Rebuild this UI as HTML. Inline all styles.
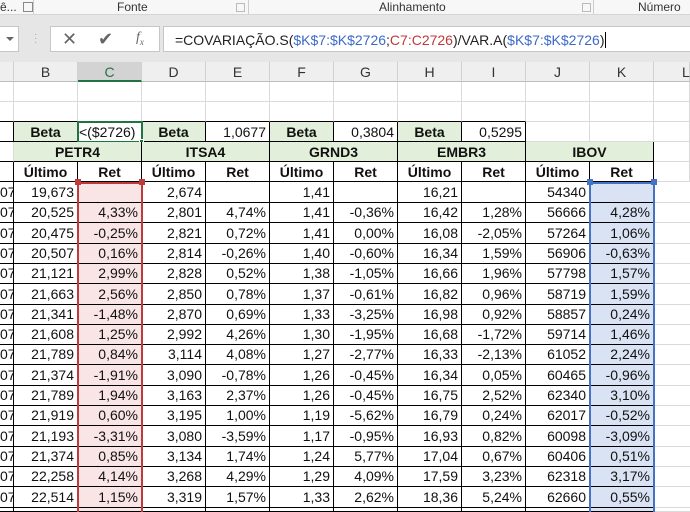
<!DOCTYPE html>
<html style="overflow:hidden;width:690px;height:512px"><head><meta charset="utf-8"><style>
*{margin:0;padding:0;box-sizing:border-box}
body{width:690px;height:512px;overflow:hidden;background:#fff;font-family:"Liberation Sans",sans-serif;position:relative}
.a{position:absolute}
.rib{left:0;top:0;width:690px;height:15px;background:#f7f7f7;border-bottom:1px solid #d5d5d5;font-size:12px;color:#333;overflow:hidden}
.band{left:0;top:15px;width:690px;height:47px;background:#e6e6e6}
.box{background:#fff;border:1px solid #c6c6c6}
.ch{top:62px;height:20px;background:#efefef;border-right:1px solid #d0d0d0;border-bottom:1px solid #bdbdbd;font-size:14px;color:#333;text-align:center;line-height:20px}
.row{position:absolute;left:0;width:690px;height:21px}
.c{position:absolute;top:0;height:100%;font-size:14px;line-height:20px;text-align:right;padding-right:3px;color:#111;white-space:nowrap;overflow:hidden}
.b{border-right:1px solid #000;border-bottom:1px solid #000}
.g{border-right:1px solid #dadada;border-bottom:1px solid #dadada}
.ctr{text-align:center;padding:0;font-weight:bold}
.grn{background:#e2efda}
.d .c:nth-child(1){left:0;width:14px;padding-right:0}
.d .c:nth-child(2){left:14px;width:64px}
.d .c:nth-child(3){left:78px;width:64px}
.d .c:nth-child(4){left:142px;width:64px}
.d .c:nth-child(5){left:206px;width:64px}
.d .c:nth-child(6){left:270px;width:64px}
.d .c:nth-child(7){left:334px;width:64px}
.d .c:nth-child(8){left:398px;width:64px}
.d .c:nth-child(9){left:462px;width:64px}
.d .c:nth-child(10){left:526px;width:64px}
.d .c:nth-child(11){left:590px;width:64px}
.d .c:nth-child(12){left:654px;width:36px;border-right:none;border-bottom:1px solid #dadada}
.d .c{border-right:1px solid #000;border-bottom:1px solid #000}
</style></head><body>
<div class="a rib">
<span class="a" style="left:0;top:0">ê...</span>
<span class="a" style="left:23px;top:2px;width:10px;height:10px;border:1px solid #888"></span>
<span class="a" style="left:33px;top:0;height:15px;border-left:1px solid #ccc"></span>
<span class="a" style="left:117px;top:0">Fonte</span>
<span class="a" style="left:236px;top:3px;width:9px;height:9px;border:1px solid #bbb"></span>
<span class="a" style="left:248px;top:0;height:15px;border-left:1px solid #ccc"></span>
<span class="a" style="left:379px;top:0">Alinhamento</span>
<span class="a" style="left:582px;top:3px;width:9px;height:9px;border:1px solid #bbb"></span>
<span class="a" style="left:593px;top:0;height:15px;border-left:1px solid #ccc"></span>
<span class="a" style="left:638px;top:0">Número</span>
</div>
<div class="a band"></div>
<div class="a box" style="left:-2px;top:26px;width:21px;height:26px"><span class="a" style="left:7px;top:10px;border-left:4px solid transparent;border-right:4px solid transparent;border-top:4px solid #666"></span></div>
<div class="a" style="left:34px;top:33px;color:#aaa;font-size:10px;line-height:4px">·<br>·<br>·</div>
<div class="a box" style="left:50px;top:26px;width:110px;height:26px;color:#666">
<span class="a" style="left:11px;top:2px;font-size:18px">✕</span>
<span class="a" style="left:47px;top:2px;font-size:18px">✔</span>
<span class="a" style="left:85px;top:3px;font-size:14px;font-style:italic;font-family:'Liberation Serif',serif">f<sub style="font-size:9px">x</sub></span>
</div>
<div class="a box" style="left:163px;top:26px;width:530px;height:26px;font-size:14px;line-height:26px;padding-left:11px;color:#222;white-space:nowrap">=COVARIAÇÃO.S(<span style="color:#3d6ac8">$K$7:$K$2726</span>;<span style="color:#c0393b">C7:C2726</span>)/VAR.A(<span style="color:#3d6ac8">$K$7:$K$2726</span>)<span style="border-left:1px solid #000;margin-left:1px"></span></div>
<div class="a ch" style="left:0;width:14px"></div>
<div class="a ch" style="left:14px;width:64px">B</div>
<div class="a ch" style="left:78px;width:64px;background:#d3d3d3;border-bottom:2px solid #217346;color:#217346">C</div>
<div class="a ch" style="left:142px;width:64px">D</div>
<div class="a ch" style="left:206px;width:64px">E</div>
<div class="a ch" style="left:270px;width:64px">F</div>
<div class="a ch" style="left:334px;width:64px">G</div>
<div class="a ch" style="left:398px;width:64px">H</div>
<div class="a ch" style="left:462px;width:64px">I</div>
<div class="a ch" style="left:526px;width:64px">J</div>
<div class="a ch" style="left:590px;width:64px">K</div>
<div class="a ch" style="left:654px;width:36px;text-align:left;padding-left:28px">L</div>
<div class="row" style="top:82px;height:20px"><div class="c g" style="left:0;width:14px"></div><div class="c g" style="left:14px;width:64px"></div><div class="c g" style="left:78px;width:64px"></div><div class="c g" style="left:142px;width:64px"></div><div class="c g" style="left:206px;width:64px"></div><div class="c g" style="left:270px;width:64px"></div><div class="c g" style="left:334px;width:64px"></div><div class="c g" style="left:398px;width:64px"></div><div class="c g" style="left:462px;width:64px"></div><div class="c g" style="left:526px;width:64px"></div><div class="c g" style="left:590px;width:64px"></div><div class="c g" style="left:654px;width:36px"></div></div>
<div class="row" style="top:102px;height:20px"><div class="c g" style="left:0;width:14px;border-bottom-color:#000"></div><div class="c g" style="left:14px;width:64px;border-bottom-color:#000"></div><div class="c g" style="left:78px;width:64px;border-bottom-color:#000"></div><div class="c g" style="left:142px;width:64px;border-bottom-color:#000"></div><div class="c g" style="left:206px;width:64px;border-bottom-color:#000"></div><div class="c g" style="left:270px;width:64px;border-bottom-color:#000"></div><div class="c g" style="left:334px;width:64px;border-bottom-color:#000"></div><div class="c g" style="left:398px;width:64px;border-bottom-color:#000"></div><div class="c g" style="left:462px;width:64px;border-bottom-color:#000"></div><div class="c g" style="left:526px;width:64px"></div><div class="c g" style="left:590px;width:64px"></div><div class="c g" style="left:654px;width:36px"></div></div>
<div class="row" style="top:122px;height:20px">
<div class="c b" style="left:0;width:14px"></div>
<div class="c b ctr grn" style="left:14px;width:64px">Beta</div>
<div class="c b" style="left:78px;width:64px;text-align:left;padding-left:1px">&lt;($2726)</div>
<div class="c b ctr grn" style="left:142px;width:64px">Beta</div>
<div class="c b" style="left:206px;width:64px">1,0677</div>
<div class="c b ctr grn" style="left:270px;width:64px">Beta</div>
<div class="c b" style="left:334px;width:64px">0,3804</div>
<div class="c b ctr grn" style="left:398px;width:64px">Beta</div>
<div class="c b" style="left:462px;width:64px">0,5295</div>
<div class="c g" style="left:526px;width:64px"></div><div class="c g" style="left:590px;width:64px"></div><div class="c g" style="left:654px;width:36px"></div>
</div>
<div class="a" style="left:77px;top:121px;width:66px;height:22px;border:2px solid #217346"></div>
<div class="a" style="left:139px;top:139px;width:5px;height:5px;background:#217346;border:1px solid #fff"></div>
<div class="row" style="top:142px;height:20px">
<div class="c g" style="left:0;width:14px;border-bottom-color:#000"></div>
<div class="c b ctr grn" style="left:14px;width:128px">PETR4</div>
<div class="c b ctr grn" style="left:142px;width:128px">ITSA4</div>
<div class="c b ctr grn" style="left:270px;width:128px">GRND3</div>
<div class="c b ctr grn" style="left:398px;width:128px">EMBR3</div>
<div class="c b ctr grn" style="left:526px;width:128px">IBOV</div>
<div class="c g" style="left:654px;width:36px"></div>
</div>
<div class="row" style="top:162px;height:20px">
<div class="c b" style="left:0;width:14px"></div>
<div class="c b ctr" style="left:14px;width:64px">Último</div><div class="c b ctr" style="left:78px;width:64px">Ret</div>
<div class="c b ctr" style="left:142px;width:64px">Último</div><div class="c b ctr" style="left:206px;width:64px">Ret</div>
<div class="c b ctr" style="left:270px;width:64px">Último</div><div class="c b ctr" style="left:334px;width:64px">Ret</div>
<div class="c b ctr" style="left:398px;width:64px">Último</div><div class="c b ctr" style="left:462px;width:64px">Ret</div>
<div class="c b ctr" style="left:526px;width:64px">Último</div><div class="c b ctr" style="left:590px;width:64px">Ret</div>
<div class="c g" style="left:654px;width:36px"></div>
</div>
<div class="a" style="left:78px;top:182px;width:64px;height:330px;background:#f9e5e5"></div>
<div class="a" style="left:590px;top:182px;width:64px;height:330px;background:#dae3f3"></div>
<div class="row d" style="top:182px"><div class="c">07</div><div class="c">19,673</div><div class="c"></div><div class="c">2,674</div><div class="c"></div><div class="c">1,41</div><div class="c"></div><div class="c">16,21</div><div class="c"></div><div class="c">54340</div><div class="c"></div><div class="c"></div></div>
<div class="row d" style="top:202.3px"><div class="c">07</div><div class="c">20,525</div><div class="c">4,33%</div><div class="c">2,801</div><div class="c">4,74%</div><div class="c">1,41</div><div class="c">-0,36%</div><div class="c">16,42</div><div class="c">1,28%</div><div class="c">56666</div><div class="c">4,28%</div><div class="c"></div></div>
<div class="row d" style="top:222.6px"><div class="c">07</div><div class="c">20,475</div><div class="c">-0,25%</div><div class="c">2,821</div><div class="c">0,72%</div><div class="c">1,41</div><div class="c">0,00%</div><div class="c">16,08</div><div class="c">-2,05%</div><div class="c">57264</div><div class="c">1,06%</div><div class="c"></div></div>
<div class="row d" style="top:242.9px"><div class="c">07</div><div class="c">20,507</div><div class="c">0,16%</div><div class="c">2,814</div><div class="c">-0,26%</div><div class="c">1,40</div><div class="c">-0,60%</div><div class="c">16,34</div><div class="c">1,59%</div><div class="c">56906</div><div class="c">-0,63%</div><div class="c"></div></div>
<div class="row d" style="top:263.2px"><div class="c">07</div><div class="c">21,121</div><div class="c">2,99%</div><div class="c">2,828</div><div class="c">0,52%</div><div class="c">1,38</div><div class="c">-1,05%</div><div class="c">16,66</div><div class="c">1,96%</div><div class="c">57798</div><div class="c">1,57%</div><div class="c"></div></div>
<div class="row d" style="top:283.5px"><div class="c">07</div><div class="c">21,663</div><div class="c">2,56%</div><div class="c">2,850</div><div class="c">0,78%</div><div class="c">1,37</div><div class="c">-0,61%</div><div class="c">16,82</div><div class="c">0,96%</div><div class="c">58719</div><div class="c">1,59%</div><div class="c"></div></div>
<div class="row d" style="top:303.8px"><div class="c">07</div><div class="c">21,341</div><div class="c">-1,48%</div><div class="c">2,870</div><div class="c">0,69%</div><div class="c">1,33</div><div class="c">-3,25%</div><div class="c">16,98</div><div class="c">0,92%</div><div class="c">58857</div><div class="c">0,24%</div><div class="c"></div></div>
<div class="row d" style="top:324.1px"><div class="c">07</div><div class="c">21,608</div><div class="c">1,25%</div><div class="c">2,992</div><div class="c">4,26%</div><div class="c">1,30</div><div class="c">-1,95%</div><div class="c">16,68</div><div class="c">-1,72%</div><div class="c">59714</div><div class="c">1,46%</div><div class="c"></div></div>
<div class="row d" style="top:344.4px"><div class="c">07</div><div class="c">21,789</div><div class="c">0,84%</div><div class="c">3,114</div><div class="c">4,08%</div><div class="c">1,27</div><div class="c">-2,77%</div><div class="c">16,33</div><div class="c">-2,13%</div><div class="c">61052</div><div class="c">2,24%</div><div class="c"></div></div>
<div class="row d" style="top:364.7px"><div class="c">07</div><div class="c">21,374</div><div class="c">-1,91%</div><div class="c">3,090</div><div class="c">-0,78%</div><div class="c">1,26</div><div class="c">-0,45%</div><div class="c">16,34</div><div class="c">0,05%</div><div class="c">60465</div><div class="c">-0,96%</div><div class="c"></div></div>
<div class="row d" style="top:385px"><div class="c">07</div><div class="c">21,789</div><div class="c">1,94%</div><div class="c">3,163</div><div class="c">2,37%</div><div class="c">1,26</div><div class="c">-0,45%</div><div class="c">16,75</div><div class="c">2,52%</div><div class="c">62340</div><div class="c">3,10%</div><div class="c"></div></div>
<div class="row d" style="top:405.3px"><div class="c">07</div><div class="c">21,919</div><div class="c">0,60%</div><div class="c">3,195</div><div class="c">1,00%</div><div class="c">1,19</div><div class="c">-5,62%</div><div class="c">16,79</div><div class="c">0,24%</div><div class="c">62017</div><div class="c">-0,52%</div><div class="c"></div></div>
<div class="row d" style="top:425.6px"><div class="c">07</div><div class="c">21,193</div><div class="c">-3,31%</div><div class="c">3,080</div><div class="c">-3,59%</div><div class="c">1,17</div><div class="c">-0,95%</div><div class="c">16,93</div><div class="c">0,82%</div><div class="c">60098</div><div class="c">-3,09%</div><div class="c"></div></div>
<div class="row d" style="top:445.9px"><div class="c">07</div><div class="c">21,374</div><div class="c">0,85%</div><div class="c">3,134</div><div class="c">1,74%</div><div class="c">1,24</div><div class="c">5,77%</div><div class="c">17,04</div><div class="c">0,67%</div><div class="c">60406</div><div class="c">0,51%</div><div class="c"></div></div>
<div class="row d" style="top:466.2px"><div class="c">07</div><div class="c">22,258</div><div class="c">4,14%</div><div class="c">3,268</div><div class="c">4,29%</div><div class="c">1,29</div><div class="c">4,09%</div><div class="c">17,59</div><div class="c">3,23%</div><div class="c">62318</div><div class="c">3,17%</div><div class="c"></div></div>
<div class="row d" style="top:486.5px"><div class="c">07</div><div class="c">22,514</div><div class="c">1,15%</div><div class="c">3,319</div><div class="c">1,57%</div><div class="c">1,33</div><div class="c">2,62%</div><div class="c">18,36</div><div class="c">5,24%</div><div class="c">62660</div><div class="c">0,55%</div><div class="c"></div></div>
<div class="row d" style="top:506.8px;height:5.2px"><div class="c">07</div><div class="c">22,987</div><div class="c">2,10%</div><div class="c">3,383</div><div class="c">1,91%</div><div class="c">1,34</div><div class="c">1,06%</div><div class="c">18,25</div><div class="c">0,82%</div><div class="c">62548</div><div class="c">1,42%</div><div class="c"></div></div>
<div class="a" style="left:77px;top:182px;width:66px;height:340px;border:2px solid #c0393b"></div>
<div class="a" style="left:75px;top:179px;width:6px;height:6px;background:#c0393b"></div>
<div class="a" style="left:139px;top:179px;width:6px;height:6px;background:#c0393b"></div>
<div class="a" style="left:589px;top:182px;width:66px;height:340px;border:2px solid #4472c4"></div>
<div class="a" style="left:587px;top:179px;width:6px;height:6px;background:#4472c4"></div>
<div class="a" style="left:651px;top:179px;width:6px;height:6px;background:#4472c4"></div>
</body></html>
